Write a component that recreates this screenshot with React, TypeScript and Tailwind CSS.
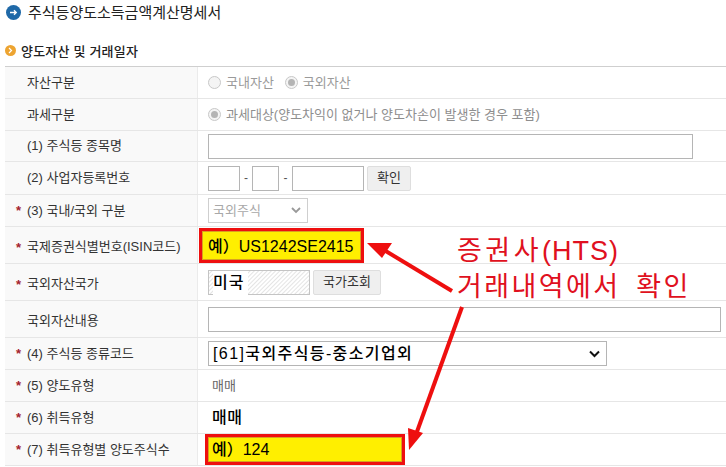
import React from "react";

const F = '[font-family:"Liberation_Sans","Noto_Sans_CJK_KR",sans-serif]';

function Row({ h, star, tall, label, children }: { h: string; star?: boolean; tall?: boolean; label: string; children?: React.ReactNode }) {
  return (
    <div className={`flex ${h} border-b border-[#e6e6e6]`}>
      <div className={`w-[193px] shrink-0 flex items-center bg-[#f9f9f9] border-r border-[#ebebeb] text-[13px] text-[#333] pl-[11px] ${tall ? "pt-[4px]" : ""}`}>
        <span className="w-[11px] text-[#a3232e] font-bold text-[13px] leading-none">{star ? "*" : ""}</span>
        <span className="whitespace-nowrap">{label}</span>
      </div>
      <div className="flex-1 flex items-center pl-[10px] min-w-0">{children}</div>
    </div>
  );
}

const Radio = ({ on }: { on?: boolean }) => (
  <span className="w-[13px] h-[13px] rounded-full border border-[#c8c8c8] bg-[#f4f4f4] flex items-center justify-center shrink-0">
    {on && <span className="w-[7px] h-[7px] rounded-full bg-[#b4b4b4]" />}
  </span>
);

const Btn = ({ w, children }: { w: string; children: React.ReactNode }) => (
  <span className={`${w} h-[25px] flex items-center justify-center bg-[#efefef] border border-[#dedede] rounded-[2px] text-[13px] text-[#333]`}>{children}</span>
);

const Box = ({ w }: { w: string }) => <span className={`${w} h-[25px] block border border-[#b5b5b5] bg-white shrink-0`} />;

export default function App() {
  return (
    <div className={`relative w-[726px] h-[467px] overflow-hidden bg-white ${F}`}>
      <div className="h-[24px] flex items-center pl-[6px]">
        <span className="w-[15px] h-[15px] rounded-full bg-[#1f69a8] flex items-center justify-center shrink-0">
          <svg width="9" height="9" viewBox="0 0 9 9" fill="none" stroke="#fff" strokeWidth="1.3"><path d="M1 4.5h6M5 2.2l2.3 2.3L5 6.8" /></svg>
        </span>
        <span className="ml-[7px] text-[15px] text-[#222] leading-none">주식등양도소득금액계산명세서</span>
      </div>
      <div className="h-[42px] pt-[21px] pl-[5px] flex items-start">
        <span className="w-[11px] h-[11px] rounded-full bg-[#eda431] flex items-center justify-center shrink-0">
          <svg width="7" height="7" viewBox="0 0 7 7" fill="none" stroke="#fff" strokeWidth="1.2"><path d="M2 1l2.5 2.5L2 6" /></svg>
        </span>
        <span className="ml-[5px] text-[13px] font-medium text-[#222] leading-[14px] tracking-[0.2px]">양도자산 및 거래일자</span>
      </div>

      <div className="ml-[5px] border-t border-[#cfcfcf]">
        <Row h="h-[32px]" label="자산구분">
          <Radio />
          <span className="ml-[5px] text-[13px] text-[#9a9a9a]">국내자산</span>
          <span className="ml-[11px]"><Radio on /></span>
          <span className="ml-[5px] text-[13px] text-[#9a9a9a]">국외자산</span>
        </Row>
        <Row h="h-[32px]" label="과세구분">
          <Radio on />
          <span className="ml-[5px] text-[13px] text-[#8e8e8e] whitespace-nowrap">과세대상(양도차익이 없거나 양도차손이 발생한 경우 포함)</span>
        </Row>
        <Row h="h-[31px]" label="(1) 주식등 종목명"><Box w="w-[485px]" /></Row>
        <Row h="h-[33px]" label="(2) 사업자등록번호">
          <Box w="w-[32px]" />
          <span className="w-[12px] text-center text-[12px] text-[#555]">-</span>
          <Box w="w-[27px]" />
          <span className="w-[13px] text-center text-[12px] text-[#555]">-</span>
          <Box w="w-[72px]" />
          <span className="ml-[3px]"><Btn w="w-[44px]">확인</Btn></span>
        </Row>
        <Row h="h-[32px]" star label="(3) 국내/국외 구분">
          <span className="w-[100px] h-[25px] border border-[#cfcfcf] flex items-center justify-between pl-[4px] pr-[6px] text-[13px] text-[#a8a8a8]">
            국외주식
            <svg width="10" height="7" viewBox="0 0 10 7" fill="none" stroke="#999" strokeWidth="1.8"><path d="M1 1l4 4 4-4" /></svg>
          </span>
        </Row>
        <Row h="h-[37px]" star tall label="국제증권식별번호(ISIN코드)">
          <div className="-ml-[9px] w-[165px] h-[35px] bg-[#ffef00] border-[3px] border-[#ee0f0f] outline-1 outline-[#d8a020] -outline-offset-4 flex items-center pl-[6px] pt-[3px] text-[16px] font-medium text-black whitespace-nowrap">
            예）US1242SE2415
          </div>
        </Row>
        <Row h="h-[37px]" star tall label="국외자산국가">
          <span className="w-[102px] h-[25px] border border-[#c4c4c4] flex items-center pl-[4px] pt-[1px] text-[16px] font-medium text-black bg-[repeating-linear-gradient(135deg,#fff,#fff_1px,#e4e4e4_2px,#fff_3px)] shrink-0">
            <span className="bg-white pr-[4px] tracking-[1px]">미국</span>
          </span>
          <span className="ml-[3px]"><Btn w="w-[68px]"><span className="whitespace-nowrap">국가조회</span></Btn></span>
        </Row>
        <Row h="h-[37px]" tall label="국외자산내용"><Box w="w-[513px]" /></Row>
        <Row h="h-[32px]" star label="(4) 주식등 종류코드">
          <span className="w-[399px] h-[25px] border border-[#b5b5b5] flex items-center justify-between pl-[4px] pr-[6px] text-[16px] font-medium text-black tracking-[1.4px]">
            [61]국외주식등-중소기업외
            <svg width="11" height="8" viewBox="0 0 11 8" fill="none" stroke="#111" strokeWidth="2"><path d="M1 1.5l4.5 4.5L10 1.5" /></svg>
          </span>
        </Row>
        <Row h="h-[32px]" star label="(5) 양도유형"><span className="ml-[4px] text-[13px] text-[#666]">매매</span></Row>
        <Row h="h-[32px]" star label="(6) 취득유형"><span className="ml-[4px] text-[16px] font-medium text-black tracking-[0.5px]">매매</span></Row>
        <Row h="h-[32px]" star label="(7) 취득유형별 양도주식수">
          <div className="-ml-[3px] w-[200px] h-[31px] bg-[#ffef00] border-[3px] border-[#ee0f0f] outline-1 outline-[#d8a020] -outline-offset-4 flex items-center pl-[4px] text-[16px] font-medium text-black">
            예）124
          </div>
        </Row>
      </div>

      <svg className="absolute left-0 top-0" width="726" height="467" viewBox="0 0 726 467" fill="#ee0f0f">
        <path d="M452 291L384 250" stroke="#ee0f0f" strokeWidth="4" />
        <path d="M367 243L392 243L382 258Z" />
        <path d="M462 307L414 440" stroke="#ee0f0f" strokeWidth="4" />
        <path d="M409 450L408 428L423 433Z" />
      </svg>
      <div className="absolute left-[457px] top-[233px] text-[27px] leading-[36px] text-[#e01020] whitespace-nowrap">
        <div><span className="tracking-[3.5px]">증권사</span><span className="tracking-[1px]">(HTS)</span></div>
        <div className="tracking-[2.4px] [word-spacing:6px]">거래내역에서 확인</div>
      </div>
    </div>
  );
}
